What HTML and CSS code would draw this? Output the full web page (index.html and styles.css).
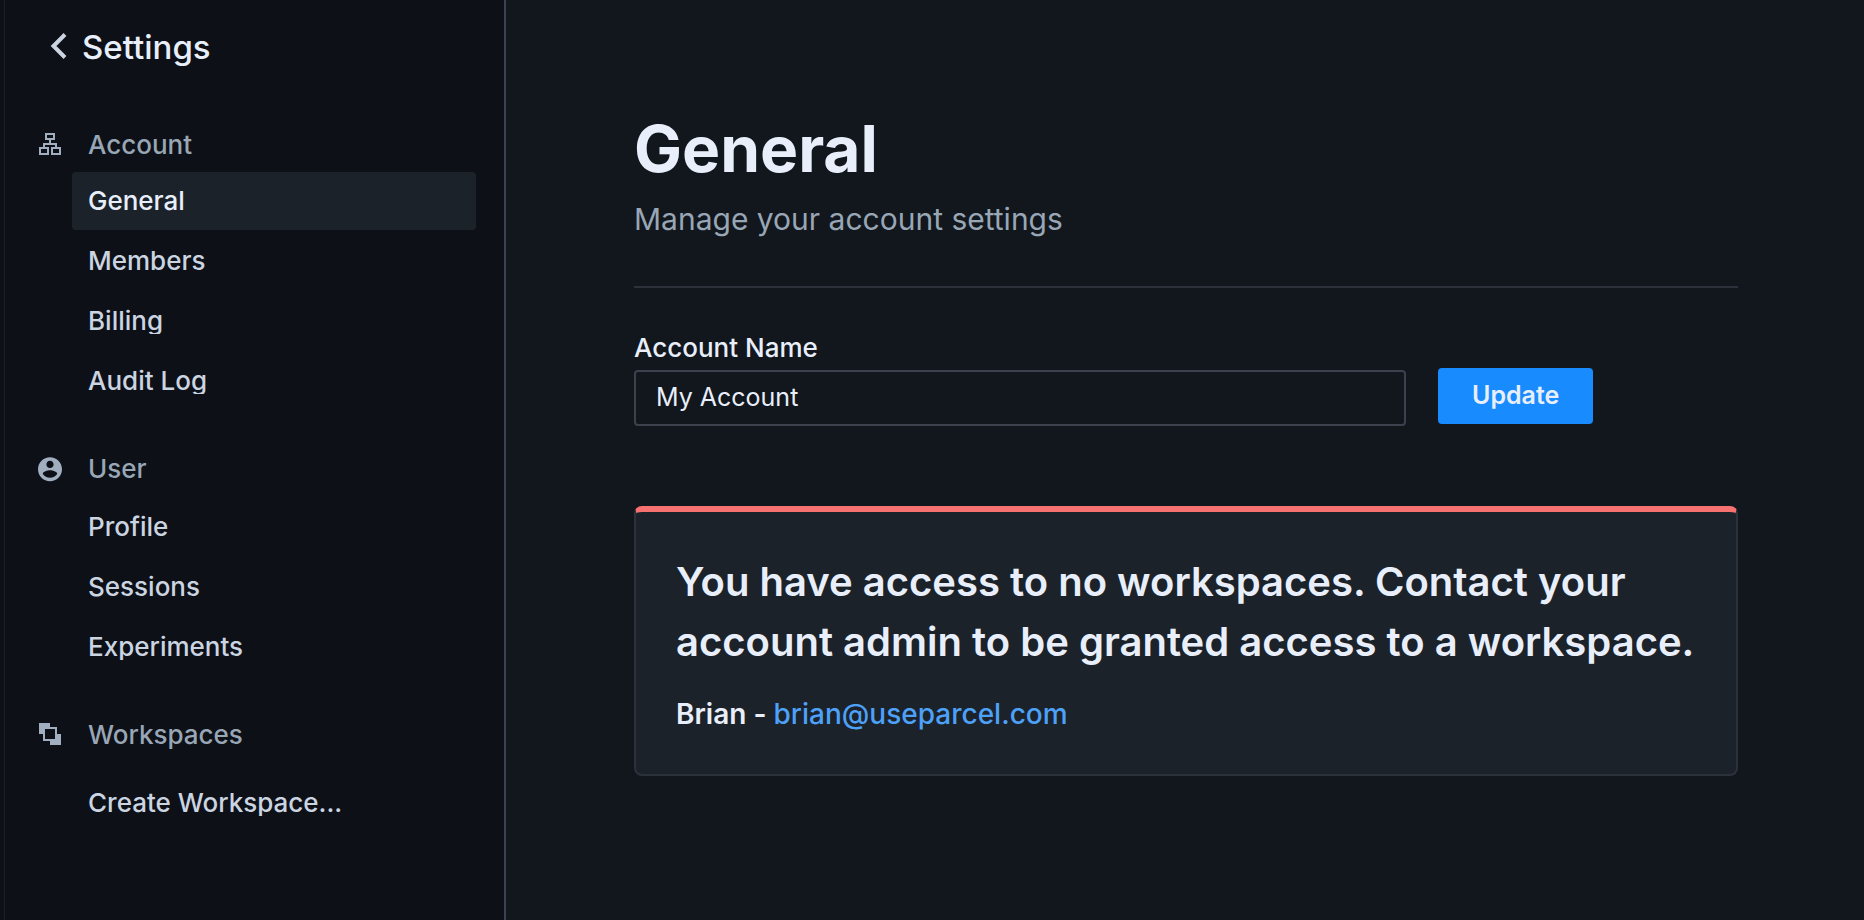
FILE: index.html
```html
<!DOCTYPE html>
<html lang="en">
<head>
<meta charset="utf-8">
<meta name="viewport" content="width=device-width, initial-scale=1">
<title>General - Settings</title>
<link rel="stylesheet" href="styles.css">
</head>
<body>
<div class="app">
  <aside class="sidebar">
    <a class="back" href="#">
      <svg class="back-icon" viewBox="0 0 18 26" aria-hidden="true"><path d="M16 1.500 4.500 13 16 24.500" fill="none" stroke="currentColor" stroke-width="4"/></svg>
      <span>Settings</span>
    </a>
    <nav class="nav" aria-label="Settings">
      <section class="group">
        <h2 class="group-title">
          <svg class="icon" viewBox="0 -1 24 24" fill="none" stroke="currentColor" stroke-width="2" aria-hidden="true"><path d="M8 1h8v5H8zM2 15h8v6H2zM14 15h8v6h-8zM12 6v5M6 15v-4h12v4"/></svg>
          Account
        </h2>
        <ul class="list">
          <li><a class="item active" href="#" aria-current="page"><span class="item-text">General</span></a></li>
          <li><a class="item" href="#"><span class="item-text">Members</span></a></li>
          <li><a class="item" href="#"><span class="item-text">Billing</span></a></li>
          <li><a class="item" href="#"><span class="item-text">Audit Log</span></a></li>
        </ul>
      </section>
      <section class="group user">
        <h2 class="group-title">
          <svg class="icon" viewBox="2 1 20 20" fill="currentColor" aria-hidden="true"><path d="M12 2C6.480 2 2 6.480 2 12s4.480 10 10 10 10-4.480 10-10S17.520 2 12 2zm0 3c1.660 0 3 1.340 3 3s-1.340 3-3 3-3-1.340-3-3 1.340-3 3-3zm0 14.200c-2.500 0-4.710-1.280-6-3.220.03-1.990 4-3.080 6-3.080 1.990 0 5.970 1.090 6 3.080-1.290 1.940-3.500 3.220-6 3.220z"/></svg>
          User
        </h2>
        <ul class="list">
          <li><a class="item" href="#"><span class="item-text">Profile</span></a></li>
          <li><a class="item" href="#"><span class="item-text">Sessions</span></a></li>
          <li><a class="item" href="#"><span class="item-text">Experiments</span></a></li>
        </ul>
      </section>
      <section class="group workspaces">
        <h2 class="group-title">
          <svg class="icon" viewBox="0 -1 24 24" fill="currentColor" aria-hidden="true"><path d="M1 0h11v4h7v7h4v11H12v-4H5v-7H1zM7 6v10h10V6z" fill-rule="evenodd"/></svg>
          Workspaces
        </h2>
        <ul class="list">
          <li><a class="item" href="#"><span class="item-text">Create Workspace...</span></a></li>
        </ul>
      </section>
    </nav>
  </aside>
  <main class="main">
    <header class="page-header">
      <h1 class="title">General</h1>
      <p class="subtitle">Manage your account settings</p>
    </header>
    <form class="form">
      <div class="field">
        <label class="label" for="account-name">Account Name</label>
        <input class="input" id="account-name" type="text" value="My Account">
      </div>
      <button class="button" type="button">Update</button>
    </form>
    <section class="notice">
      <h2 class="notice-title">You have access to no workspaces. Contact your account admin to be granted access to a workspace.</h2>
      <p class="contact">Brian - <a class="mail" href="mailto:brian@useparcel.com">brian@useparcel.com</a></p>
    </section>
  </main>
</div>
</body>
</html>
```

FILE: styles.css
```css
* {
  box-sizing: border-box;
}

body {
  margin: 0;
  background: #0d1017;
  color: #e8effb;
  font-family: Inter, "Liberation Sans", sans-serif;
  font-size: 26px;
}

h1, h2, p, ul {
  margin: 0;
  padding: 0;
}

a {
  color: inherit;
  text-decoration: none;
}

.app {
  display: flex;
  min-height: 100vh;
  padding-left: 4px;
}

.sidebar {
  flex: none;
  width: 502px;
  padding: 26px 28px 32px 33px;
  border-left: 1px solid #1b2027;
  border-right: 2px solid #3b414d;
}

.back {
  display: flex;
  align-items: center;
  gap: 15px;
  margin: 0 0 50px 11px;
  font-size: 33px;
  font-weight: 500;
  line-height: 42px;
}

.back-icon {
  width: 18px;
  height: 26px;
  margin-bottom: 2px;
  color: #cbd5e1;
}

.group + .group {
  margin-top: 32px;
}

.group-title {
  display: flex;
  align-items: center;
  gap: 26px;
  height: 54px;
  padding-bottom: 2px;
  color: #98a6b5;
  font-size: 26px;
  font-weight: 500;
}

.icon {
  width: 24px;
  height: 24px;
  overflow: visible;
  color: #a0aec0;
}

.list {
  display: flex;
  flex-direction: column;
  gap: 2px;
  padding-left: 34px;
  list-style: none;
}

.user .list {
  margin-top: 2px;
}

.workspaces .list {
  margin-top: 12px;
}

.item {
  display: block;
  padding: 16px;
  border-radius: 4px;
  color: #cbd5e1;
  font-weight: 500;
}

.item-text {
  display: block;
  overflow: hidden;
  line-height: 26px;
}

.active {
  background: #1c2229;
  color: #e8effb;
}

.main {
  flex: 1;
  min-width: 0;
  padding: 110px 126px 64px 128px;
  background: #12161d;
}

.page-header {
  padding-bottom: 48px;
  border-bottom: 2px solid #2d313c;
}

.title {
  font-size: 64px;
  font-weight: 700;
  line-height: 78px;
}

.subtitle {
  margin-top: 12px;
  color: #98a6b5;
  font-size: 30px;
  line-height: 38px;
}

.form {
  display: flex;
  align-items: flex-end;
  gap: 32px;
  margin-top: 40px;
}

.field {
  display: flex;
  flex: 0 1 772px;
  flex-direction: column;
  gap: 2px;
  min-width: 0;
}

.label {
  font-weight: 500;
  line-height: 40px;
}

.input {
  width: 100%;
  height: 56px;
  padding: 0 20px 2px;
  border: 2px solid #3b414d;
  border-radius: 4px;
  background: transparent;
  color: inherit;
  font: inherit;
  font-size: 25px;
}

.button {
  height: 56px;
  margin-bottom: 2px;
  padding: 0 34px 2px;
  border: 0;
  border-radius: 4px;
  background: #188bff;
  color: #e8effb;
  font: inherit;
  font-size: 25px;
  font-weight: 600;
}

.notice {
  margin-top: 80px;
  padding: 40px;
  border: 2px solid #2d313c;
  border-top: 6px solid #f87171;
  border-radius: 8px;
  background: #1c2229;
}

.notice-title {
  font-size: 40px;
  font-weight: 600;
  line-height: 60px;
}

.contact {
  margin-top: 22px;
  font-size: 28px;
  font-weight: 600;
  line-height: 40px;
}

.mail {
  color: #4da1f8;
  font-weight: 500;
}
```
